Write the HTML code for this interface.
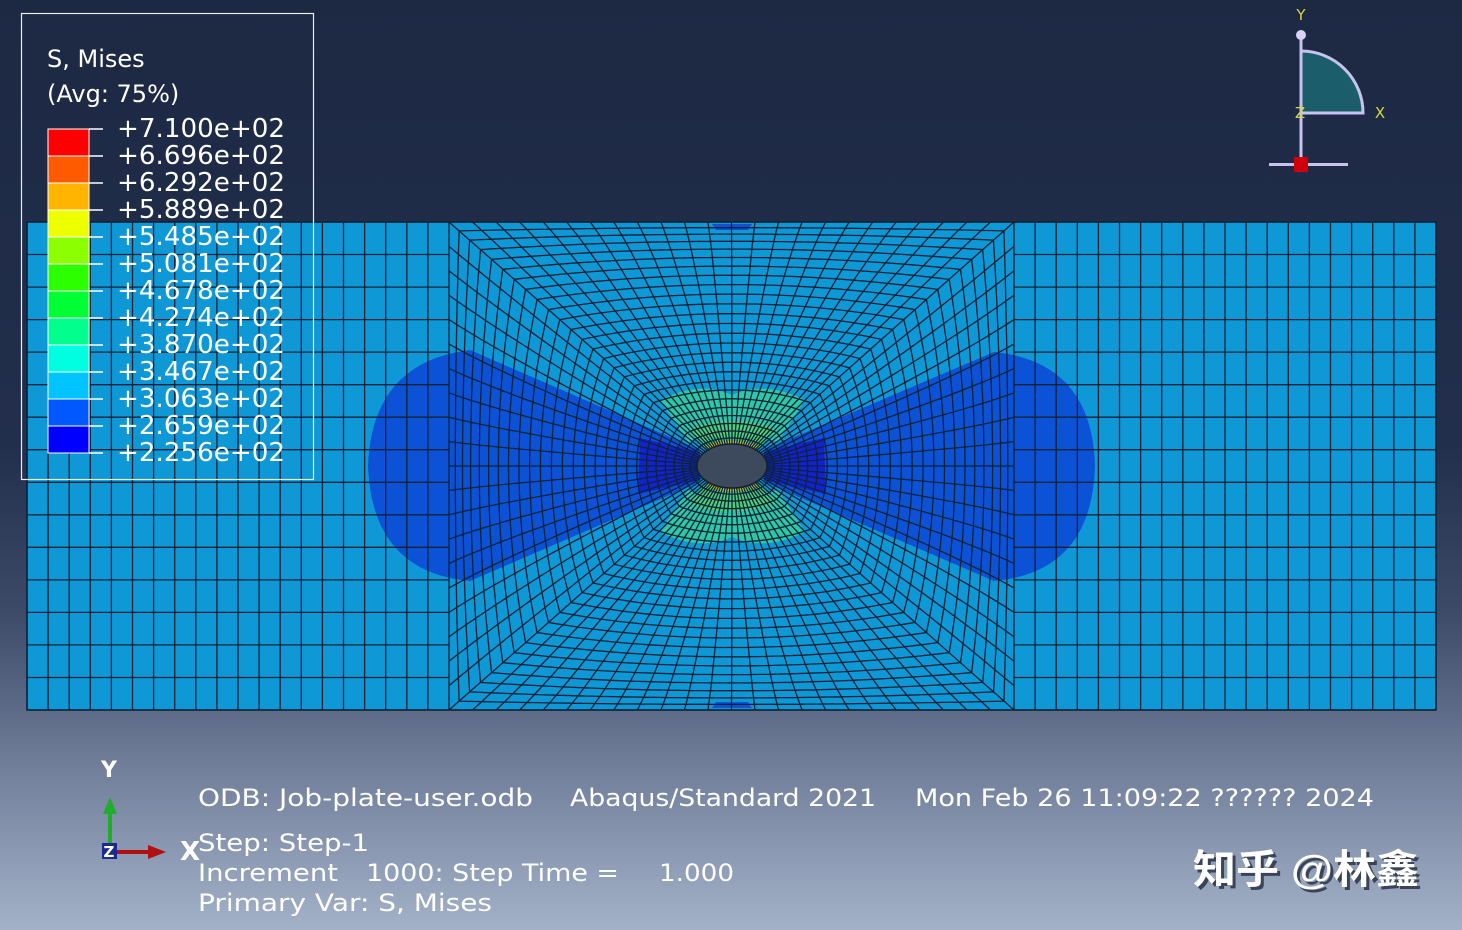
<!DOCTYPE html>
<html><head><meta charset="utf-8"><style>
html,body{margin:0;padding:0;width:1462px;height:930px;overflow:hidden;}
body{background:linear-gradient(180deg,#1d2943 0%,#222f4c 48%,#3d4a68 66%,#6f7d99 82%,#a3b1c8 100%);}
svg{position:absolute;left:0;top:0;}
text{font-family:"DejaVu Sans","Liberation Sans",sans-serif;fill:#fff;}
</style></head><body>
<svg id="s" width="1462" height="930" viewBox="0 0 1462 930" xmlns="http://www.w3.org/2000/svg">
<rect x="27" y="222" width="1409" height="488" fill="#0f98d6"/>
<path d="M700,450 L470,350 Q372,362 368,466 Q372,572 470,581 L700,482 Z" fill="#0c52d6"/>
<path d="M764,450 L994,352 Q1092,362 1095,466 Q1092,572 994,581 L764,482 Z" fill="#0c52d6"/>
<path d="M712,224 L752,224 L748,230 L716,230 Z" fill="#0c52d6"/>
<path d="M712,708 L752,708 L748,702 L716,702 Z" fill="#0c52d6"/>
<path d="M700,452 L640,438 L638,494 L700,480 Z" fill="#1222cc"/>
<path d="M764,452 L824,438 L826,494 L764,480 Z" fill="#1222cc"/>
<path d="M660,400 Q700,380 732,395 Q765,380 805,400 L778,442 Q732,428 688,442 Z" fill="#2cc8a8"/>
<path d="M690,428 Q732,414 775,428 L760,448 Q732,438 704,448 Z" fill="#4cd078"/>
<path d="M706,446 Q732,436 758,446 L752,452 Q732,444 712,452 Z" fill="#e0c020"/>
<path d="M660,532 Q700,552 732,537 Q765,552 805,532 L778,490 Q732,504 688,490 Z" fill="#2cc8a8"/>
<path d="M690,504 Q732,518 775,504 L760,484 Q732,494 704,484 Z" fill="#4cd078"/>
<path d="M706,486 Q732,496 758,486 L752,480 Q732,488 712,480 Z" fill="#e0c020"/>
<g id="mesh" fill="none" stroke="#0e2236" stroke-width="1.3"></g>
<ellipse cx="732" cy="466" rx="35" ry="22" fill="#3d4a5e" stroke="#0e2236" stroke-width="1.5"/>
<rect x="27" y="222" width="1409" height="488" fill="none" stroke="#0e2236" stroke-width="1.5"/>

<rect x="21.5" y="13.5" width="292" height="466" fill="none" stroke="#e8ecf4" stroke-width="1.2"/>
<text x="47" y="67" font-size="24">S, Mises</text>
<text x="47" y="102" font-size="24">(Avg: 75%)</text>
<g id="bar"></g>

<path d="M1301,113 L1301,51 A62,62 0 0 1 1363,113 Z" fill="#1b5d6a" stroke="#c8c2ee" stroke-width="3"/>
<line x1="1301" y1="35" x2="1301" y2="165" stroke="#c8c2ee" stroke-width="3"/>
<circle cx="1301" cy="35" r="5" fill="#d8d2f4"/>
<line x1="1269" y1="164.5" x2="1348" y2="164.5" stroke="#c8c2ee" stroke-width="3"/>
<rect x="1294" y="157" width="14" height="15" fill="#d0000a"/>
<text x="1301" y="20" font-size="15" text-anchor="middle" style="fill:#d6d63a">Y</text>
<text x="1380" y="118" font-size="15" text-anchor="middle" style="fill:#d6d63a">X</text>
<text x="1300" y="118" font-size="15" text-anchor="middle" style="fill:#d6d63a">Z</text>

<text x="109" y="777" font-size="22" font-weight="bold" text-anchor="middle">Y</text>
<line x1="110" y1="846" x2="110" y2="812" stroke="#1fae2a" stroke-width="4"/>
<path d="M103,814 L110,797 L117,814 Z" fill="#1fae2a"/>
<line x1="112" y1="852" x2="150" y2="852" stroke="#b01010" stroke-width="4"/>
<path d="M148,845 L166,852 L148,859 Z" fill="#b01010"/>
<rect x="102" y="843" width="15" height="16" fill="#1a2a90"/>
<text x="109" y="857" font-size="15" font-weight="bold" text-anchor="middle">Z</text>
<text x="190" y="860" font-size="26" font-weight="bold" text-anchor="middle">X</text>

<g font-size="24">
<text x="198" y="806" textLength="335" lengthAdjust="spacingAndGlyphs">ODB: Job-plate-user.odb</text>
<text x="570" y="806" textLength="306" lengthAdjust="spacingAndGlyphs">Abaqus/Standard 2021</text>
<text x="915" y="806" textLength="459" lengthAdjust="spacingAndGlyphs">Mon Feb 26 11:09:22 ?????? 2024</text>
<text x="198" y="851" textLength="171" lengthAdjust="spacingAndGlyphs">Step: Step-1</text>
<text x="198" y="881" textLength="140" lengthAdjust="spacingAndGlyphs">Increment</text>
<text x="366" y="881" textLength="253" lengthAdjust="spacingAndGlyphs">1000: Step Time =</text>
<text x="659" y="881" textLength="75" lengthAdjust="spacingAndGlyphs">1.000</text>
<text x="198" y="911" textLength="294" lengthAdjust="spacingAndGlyphs">Primary Var: S, Mises</text>
</g>
<text x="1196" y="886" font-size="40" font-weight="bold" textLength="226" lengthAdjust="spacingAndGlyphs" style="fill:#3a4458;font-family:'Liberation Sans','Noto Sans CJK SC',sans-serif">知乎 @林鑫</text>
<text x="1193" y="883" font-size="40" font-weight="bold" textLength="226" lengthAdjust="spacingAndGlyphs" style="font-family:'Liberation Sans','Noto Sans CJK SC',sans-serif">知乎 @林鑫</text>
</svg>
<script>
(function(){
var NS="http://www.w3.org/2000/svg",m=document.getElementById("mesh"),d="";
function grid(x0,x1,nc){
  for(var i=0;i<=nc;i++){var x=x0+(x1-x0)*i/nc;d+="M"+x.toFixed(1)+",222V710";}
  for(var j=0;j<=15;j++){var y=222+488*j/15;d+="M"+x0+","+y.toFixed(1)+"H"+x1;}
}
grid(27,449,20);grid(1014,1436,20);
var cx=732,cy=466,a=35,b=22,X0=449,X1=1014,Y0=222,Y1=710,PI=Math.PI;
var pts=[],nt=24,ns=20;
function push(px,py,t){pts.push([px,py,t]);}
for(var i=0;i<nt;i++){var f=i/nt;push(X0+(X1-X0)*f,Y0,-3*PI/4+f*PI/2);}
for(var i=0;i<ns;i++){var f=i/ns;push(X1,Y0+(Y1-Y0)*f,-PI/4+f*PI/2);}
for(var i=0;i<nt;i++){var f=i/nt;push(X1-(X1-X0)*f,Y1,PI/4+f*PI/2);}
for(var i=0;i<ns;i++){var f=i/ns;push(X0,Y1-(Y1-Y0)*f,3*PI/4+f*PI/2);}
var N=26,r=1.035;function s(k){return (Math.pow(r,k)-1)/(Math.pow(r,N)-1);}
function P(q,t){
  var A=a+(200-a)*t,B=b+(170-b)*t;
  var ex=cx+A*Math.cos(q[2]),ey=cy+B*Math.sin(q[2]);
  var w=Math.pow(t,1.2);
  return [ex*(1-w)+q[0]*w, ey*(1-w)+q[1]*w];
}
for(var p=0;p<pts.length;p++){var q=pts[p];
  for(var k=0;k<=N;k++){var v=P(q,s(k));d+=(k?"L":"M")+v[0].toFixed(1)+","+v[1].toFixed(1);}}
for(var k=1;k<=N;k++){var t=s(k);
  for(var p=0;p<=pts.length;p++){var v=P(pts[p%pts.length],t);d+=(p?"L":"M")+v[0].toFixed(1)+","+v[1].toFixed(1);}
}
var e=document.createElementNS(NS,"path");e.setAttribute("d",d);m.appendChild(e);
var cols=["#ff0000","#ff5a00","#ffb400","#eeff00","#8cff00","#2cff00","#00ff34","#00ff8c","#00ffe0","#00c4ff","#0058ff","#0000ff"];
var labs=["+7.100e+02","+6.696e+02","+6.292e+02","+5.889e+02","+5.485e+02","+5.081e+02","+4.678e+02","+4.274e+02","+3.870e+02","+3.467e+02","+3.063e+02","+2.659e+02","+2.256e+02"];
var g=document.getElementById("bar"),h="";
for(var i=0;i<12;i++){h+='<rect x="48" y="'+(129+27*i)+'" width="41" height="27" fill="'+cols[i]+'" stroke="#fff" stroke-width="1"/>';}
for(var i=0;i<13;i++){var y=129+27*i;h+='<line x1="89" y1="'+y+'" x2="103" y2="'+y+'" stroke="#fff" stroke-width="1.5"/>';
 h+='<text x="117" y="'+(y+8)+'" font-size="26" textLength="168" lengthAdjust="spacingAndGlyphs">'+labs[i]+'</text>';}
g.innerHTML=h;
})();
</script>
</body></html>
